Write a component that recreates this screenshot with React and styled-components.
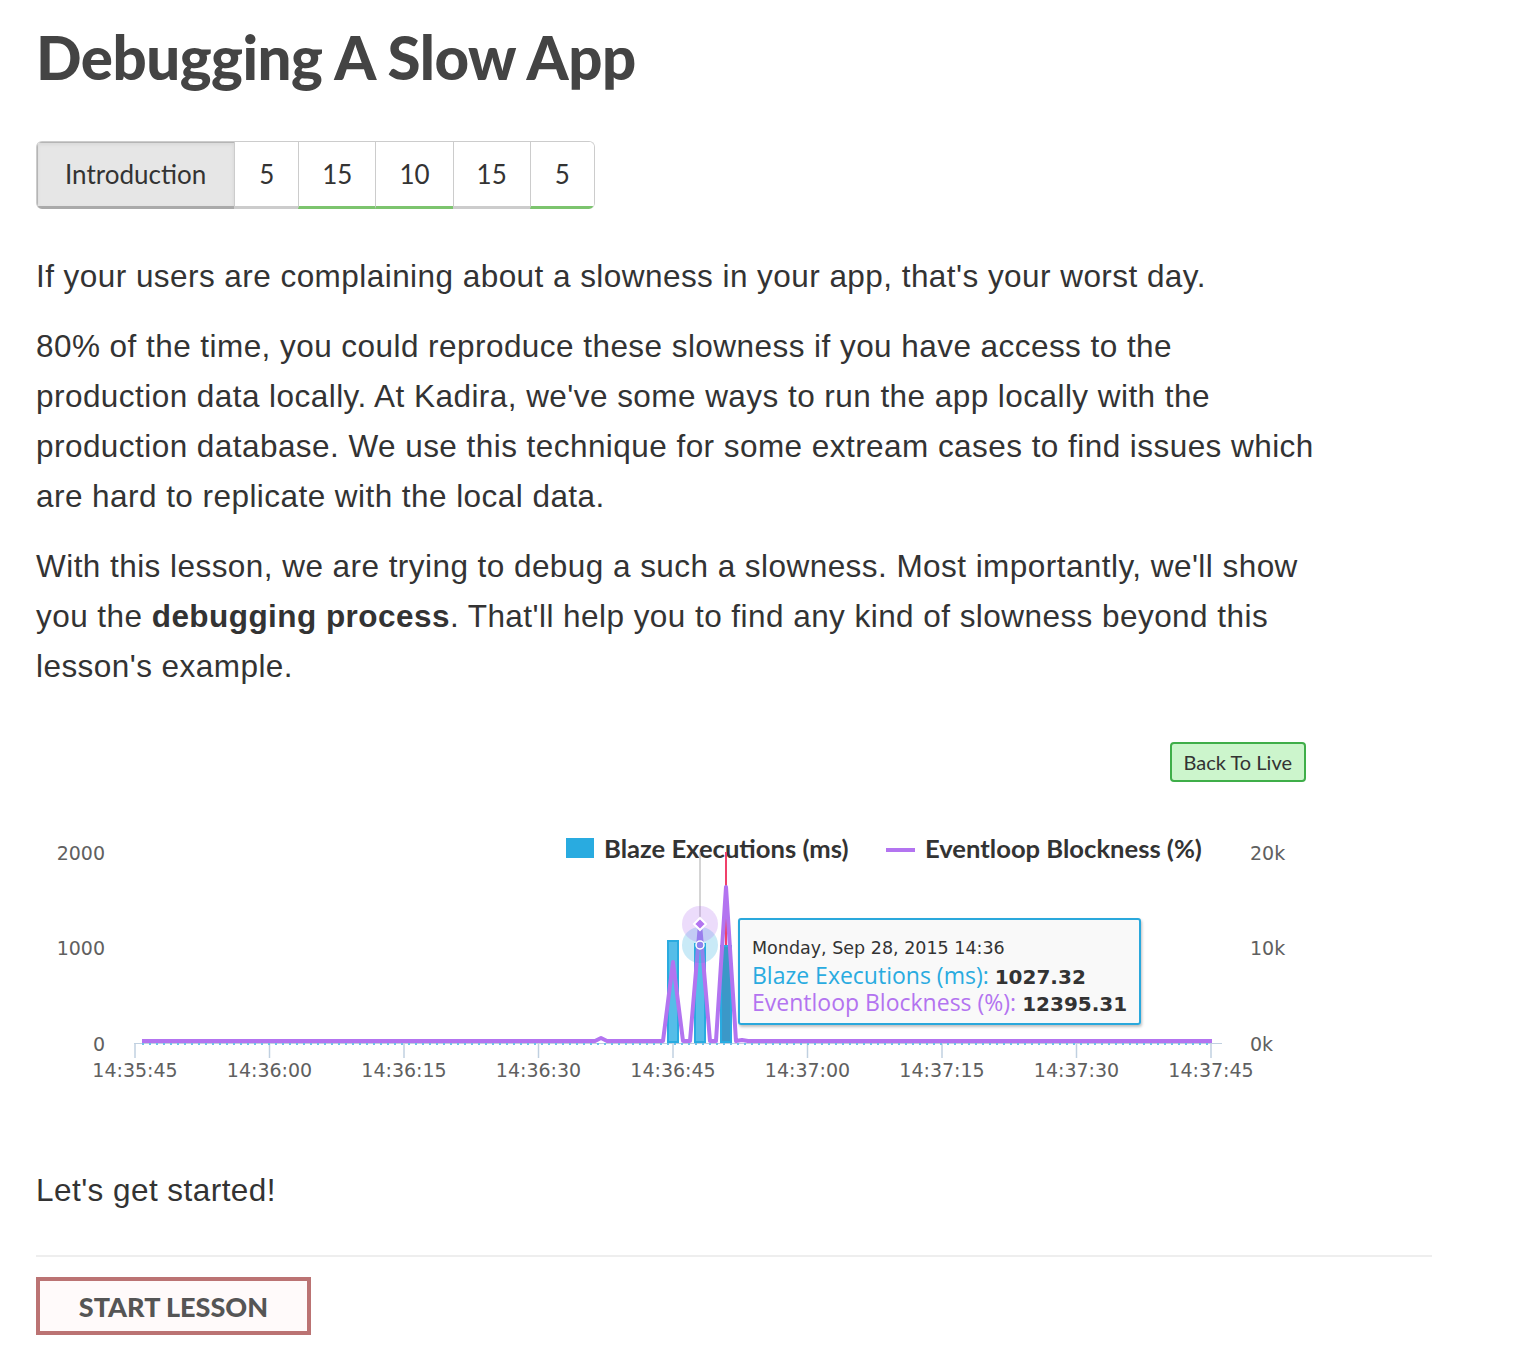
import React from "react";
import styled, { createGlobalStyle } from "styled-components";

/*============= Global ================*/
const GlobalStyle = createGlobalStyle`
  body {
    margin: 0;
    background: #fff;
    font-family: "Liberation Sans", Helvetica, Arial, sans-serif;
  }
`;

const Page = styled.div`
  padding: 21px 0 40px 36px;
  width: 1396px;
`;

const Title = styled.h1`
  margin: 0;
  font-family: Lato, "Noto Sans", sans-serif;
  font-weight: 900;
  font-size: 60px;
  letter-spacing: -0.5px;
  line-height: 72px;
  color: #444;
`;

/*============= Tabs ================*/
const Tabs = styled.div`
  display: inline-flex;
  margin-top: 48px;
  border: 1px solid #ccc;
  border-bottom: none;
  border-radius: 6px;
  overflow: hidden;
`;

const Tab = styled.div`
  box-sizing: border-box;
  height: 67px;
  padding: 0 ${(p) => p.$pad}px;
  display: flex;
  align-items: center;
  font-family: Lato, "Noto Sans", sans-serif;
  font-size: 26px;
  color: #333;
  background: ${(p) => (p.$active ? "#e6e6e6" : "#fff")};
  box-shadow: ${(p) => (p.$active ? "inset 1px 1px 0 #b5b5b5, inset 0 2px 4px rgba(0,0,0,0.08)" : "none")};
  border-bottom: 3px solid ${(p) => p.$bar};
  & + & {
    border-left: 1px solid #ccc;
  }
`;

/*============= Copy ================*/
const Text = styled.p`
  margin: 20px 0;
  max-width: 1396px;
  font-size: 31.5px;
  letter-spacing: 0.45px;
  line-height: 50px;
  color: #333;
`;

const Lead = styled(Text)`
  margin-top: 42px;
`;

const Closing = styled(Text)`
  margin-top: 65px;
`;

/*============= Chart ================*/
const ChartSection = styled.div`
  margin-top: 51px;
  width: 1290px;
`;

const ChartToolbar = styled.div`
  display: flex;
  justify-content: flex-end;
  width: 1270px;
  margin-bottom: 18px;
`;

const LiveButton = styled.button`
  height: 40px;
  padding: 0 12px;
  border: 2px solid #3fae49;
  border-radius: 4px;
  background: #ccf5cc;
  font-family: Lato, "Noto Sans", sans-serif;
  font-size: 20px;
  color: #333;
`;

const Plot = styled.div`
  position: relative;
  height: 300px;
`;

const Tooltip = styled.div`
  position: absolute;
  left: 702px;
  top: 118px;
  box-sizing: border-box;
  width: 403px;
  height: 107px;
  padding: 15px 12px 0;
  border: 2px solid #2aa8dc;
  border-radius: 3px;
  background: rgba(249, 249, 249, 0.96);
  box-shadow: 1px 2px 3px rgba(0, 0, 0, 0.25);
  white-space: nowrap;
`;

const TipDate = styled.div`
  height: 27px;
  line-height: 27px;
  font-family: "DejaVu Sans", sans-serif;
  font-size: 17.5px;
  color: #333;
`;

const TipRow = styled.div`
  height: 27px;
  line-height: 27px;
  font-family: "Open Sans", sans-serif;
  font-size: 23px;
  color: ${(p) => p.$color};
`;

const TipValue = styled.b`
  font-family: "DejaVu Sans", sans-serif;
  font-size: 20px;
  line-height: 1;
  color: #333;
`;

const Rule = styled.hr`
  margin: 40px 0 0;
  border: none;
  border-top: 2px solid #eee;
`;

const StartButton = styled.button`
  margin-top: 20px;
  width: 275px;
  height: 58px;
  border: 4px solid #bb7373;
  background: #fffafa;
  font-family: Lato, "Noto Sans", sans-serif;
  font-weight: 900;
  font-size: 27px;
  color: #555;
  text-transform: uppercase;
`;

const tabs = [
  { label: "Introduction", bar: "#aaa", active: true, pad: 28 },
  { label: "5", bar: "#ccc", pad: 24 },
  { label: "15", bar: "#7cc46e", pad: 23 },
  { label: "10", bar: "#7cc46e", pad: 23 },
  { label: "15", bar: "#ccc", pad: 23 },
  { label: "5", bar: "#7cc46e", pad: 24 },
];

const xLabels = ["14:35:45", "14:36:00", "14:36:15", "14:36:30", "14:36:45", "14:37:00", "14:37:15", "14:37:30", "14:37:45"];
const yLeft = [["2000", 860], ["1000", 955], ["0", 1051]];
const yRight = [["20k", 860], ["10k", 955], ["0k", 1051]];

const purple = "#b374f0";
const blue = "#29abe0";

const Chart = () => (
  <svg width="1290" height="300" viewBox="36 800 1290 300" style={{ display: "block" }}>
    {/* legend */}
    <rect x="566" y="838" width="28" height="20" fill={blue} />
    <text x="604" y="858" fontFamily="Lato, sans-serif" fontWeight="700" fontSize="25.6" fill="#333">
      Blaze Executions (ms)
    </text>
    <line x1="886" y1="850" x2="915" y2="850" stroke={purple} strokeWidth="4" />
    <text x="925" y="858" fontFamily="Lato, sans-serif" fontWeight="700" fontSize="25.6" fill="#333">
      Eventloop Blockness (%)
    </text>

    {/* axes labels */}
    <g fontFamily="DejaVu Sans, sans-serif" fontSize="19" fill="#606060">
      {yLeft.map(([t, y]) => (
        <text key={t} x="105" y={y} textAnchor="end">{t}</text>
      ))}
      {yRight.map(([t, y]) => (
        <text key={t} x="1250" y={y}>{t}</text>
      ))}
      {xLabels.map((t, i) => (
        <text key={t} x={135 + i * 134.5} y="1077" textAnchor="middle">{t}</text>
      ))}
    </g>
    <line x1="134" y1="1043.5" x2="1222" y2="1043.5" stroke="#c0d0e0" strokeWidth="1" />
    {xLabels.map((t, i) => (
      <line key={t} x1={135 + i * 134.5} y1="1043" x2={135 + i * 134.5} y2="1058" stroke="#c0d0e0" strokeWidth="1.5" />
    ))}

    {/* crosshair + red series */}
    <line x1="700" y1="852" x2="700" y2="922" stroke="#aaa" strokeWidth="1" />
    <line x1="726" y1="852" x2="726" y2="990" stroke="#f0406a" strokeWidth="2" />

    {/* blue columns */}
    <line x1="142" y1="1044" x2="1212" y2="1044" stroke="#6cc3ea" strokeWidth="2" strokeDasharray="2 5" />
    <rect x="668" y="941" width="10" height="101" fill="#55bde8" stroke={blue} strokeWidth="2" />
    <rect x="695" y="944" width="10" height="98" fill="#55bde8" stroke={blue} strokeWidth="2" />
    <rect x="721" y="946" width="10" height="96" fill="#3b98c8" stroke={blue} strokeWidth="2" />

    {/* purple line */}
    <path
      d="M142 1041 L595 1041 L601 1038 L607 1041 L663 1041 L673 962 L683 1041 L690 1041 L700 924 L710 1041 L716 1041 L726 887 L736 1041 L742 1040 L748 1041 L1212 1041"
      fill="none"
      stroke={purple}
      strokeWidth="4"
      strokeLinejoin="round"
    />

    {/* hover halos and markers */}
    <circle cx="700" cy="945" r="18" fill={blue} opacity="0.25" />
    <circle cx="700" cy="924" r="18" fill={purple} opacity="0.25" />
    <circle cx="700" cy="945" r="4" fill="none" stroke="#fff" strokeWidth="1.5" />
    <polygon points="700,918 706,924 700,930 694,924" fill={purple} stroke="#fff" strokeWidth="2" />
  </svg>
);

export default function App() {
  return (
    <Page>
      <GlobalStyle />
      <Title>Debugging A Slow App</Title>
      <Tabs>
        {tabs.map((t, i) => (
          <Tab key={i} $active={t.active} $bar={t.bar} $pad={t.pad}>
            {t.label}
          </Tab>
        ))}
      </Tabs>

      <Lead>If your users are complaining about a slowness in your app, that's your worst day.</Lead>
      <Text>
        80% of the time, you could reproduce these slowness if you have access to the
        <br />
        production data locally. At Kadira, we've some ways to run the app locally with the
        <br />
        production database. We use this technique for some extream cases to find issues which
        <br />
        are hard to replicate with the local data.
      </Text>
      <Text>
        With this lesson, we are trying to debug a such a slowness. Most importantly, we'll show
        <br />
        you the <b>debugging process</b>. That'll help you to find any kind of slowness beyond this
        <br />
        lesson's example.
      </Text>

      <ChartSection>
        <ChartToolbar>
          <LiveButton>Back To Live</LiveButton>
        </ChartToolbar>
        <Plot>
          <Chart />
          <Tooltip>
            <TipDate>Monday, Sep 28, 2015 14:36</TipDate>
            <TipRow $color={blue}>
              Blaze Executions (ms): <TipValue>1027.32</TipValue>
            </TipRow>
            <TipRow $color={purple}>
              Eventloop Blockness (%): <TipValue>12395.31</TipValue>
            </TipRow>
          </Tooltip>
        </Plot>
      </ChartSection>

      <Closing>Let's get started!</Closing>
      <Rule />
      <StartButton>Start Lesson</StartButton>
    </Page>
  );
}
